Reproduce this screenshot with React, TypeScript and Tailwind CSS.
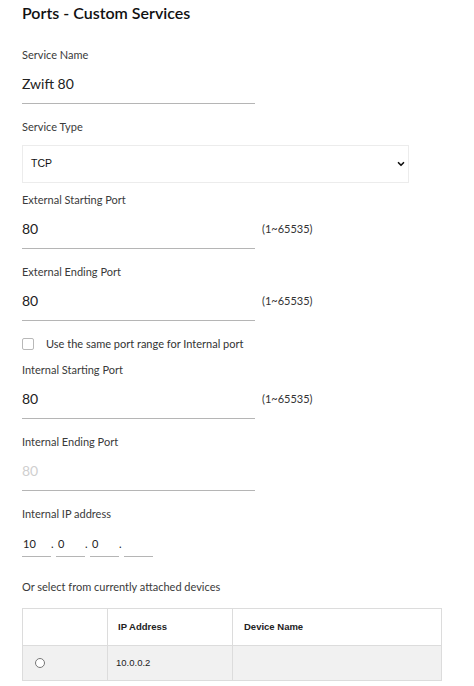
import { ChevronDown } from "lucide-react";

const font = { fontFamily: "Lato, 'Open Sans', sans-serif" };

function Label({ children }: { children: React.ReactNode }) {
  return <div className="h-[16px] text-[11px] leading-[16px] text-[#3a3a3a]">{children}</div>;
}

function PortField({ label, value, muted, range }: { label: string; value: string; muted?: boolean; range?: boolean }) {
  return (
    <div>
      <Label>{label}</Label>
      <div className="mt-[11px] flex items-start">
        <div className="w-[233px] border-b border-[#b5b5b5] pb-[9px]">
          <div className={`h-[20px] text-[14px] leading-[20px] ${muted ? "text-[#cfcfcf]" : "text-[#222]"}`}>{value}</div>
        </div>
        {range && <div className="ml-[7px] text-[11px] leading-[20px] text-[#333]">(1~65535)</div>}
      </div>
    </div>
  );
}

export default function App() {
  return (
    <div className="min-h-[686px] w-[474px] overflow-hidden bg-white px-[22px]" style={font}>
      <h1 className="h-[26px] text-[16px] font-semibold leading-[26px] text-[#111]">Ports - Custom Services</h1>

      <div className="mt-[21px]">
        <PortField label="Service Name" value="Zwift 80" />
      </div>

      <div className="mt-[15px]">
        <Label>Service Type</Label>
        <div className="mt-[10px] flex h-[38px] w-[387px] items-center justify-between border border-[#ececec] pl-[8px] pr-[2px]">
          <span className="text-[10.5px] font-medium text-[#111]" style={{ fontFamily: "'Liberation Sans', Arial, sans-serif" }}>TCP</span>
          <ChevronDown className="h-[10px] w-[10px] text-[#111]" strokeWidth={4} />
        </div>
      </div>

      <div className="mt-[9px] flex flex-col gap-[15px]">
        <PortField label="External Starting Port" value="80" range />
        <PortField label="External Ending Port" value="80" range />
      </div>

      <div className="mt-[17px] flex h-[12px] items-center">
        <span className="h-[12px] w-[12px] rounded-[2px] border border-[#b8b8b8] bg-white" />
        <span className="ml-[12px] text-[11px] text-[#333]">Use the same port range for Internal port</span>
      </div>

      <div className="mt-[12px] flex flex-col gap-[15px]">
        <PortField label="Internal Starting Port" value="80" range />
        <PortField label="Internal Ending Port" value="80" muted />
      </div>

      <div className="mt-[15px]">
        <Label>Internal IP address</Label>
        <div className="mt-[14px] flex gap-[5px]">
          {["10", "0", "0", ""].map((v, i) => (
            <div key={i} className="w-[29px] border-b border-[#b5b5b5] pb-[4px]">
              <div className="flex h-[16px] text-[11px] leading-[16px] text-[#222]">
                {i > 0 && <span className="-ml-[5px] w-[7px]">.</span>}
                <span className={i === 0 ? "pl-[1px]" : ""}>{v}</span>
              </div>
            </div>
          ))}
        </div>
      </div>

      <div className="mt-[22px]">
        <Label>Or select from currently attached devices</Label>
      </div>

      <table
        className="mt-[13px] w-[420px] border-collapse text-[9.5px] text-[#222]"
        style={{ fontFamily: "'Liberation Sans', Arial, sans-serif" }}
      >
        <thead>
          <tr className="h-[37px] bg-white">
            <th className="w-[85px] border border-[#dcdcdc]"></th>
            <th className="w-[125px] border border-[#dcdcdc] pl-[10px] text-left font-bold">IP Address</th>
            <th className="border border-[#dcdcdc] pl-[11px] text-left font-bold">Device Name</th>
          </tr>
        </thead>
        <tbody>
          <tr className="h-[35px] bg-[#f1f1f1]">
            <td className="border border-[#dcdcdc] pl-[12px]">
              <span className="block h-[10px] w-[10px] rounded-full border border-[#777] bg-white" />
            </td>
            <td className="border border-[#dcdcdc] pl-[8px]">10.0.0.2</td>
            <td className="border border-[#dcdcdc]"></td>
          </tr>
        </tbody>
      </table>
    </div>
  );
}
